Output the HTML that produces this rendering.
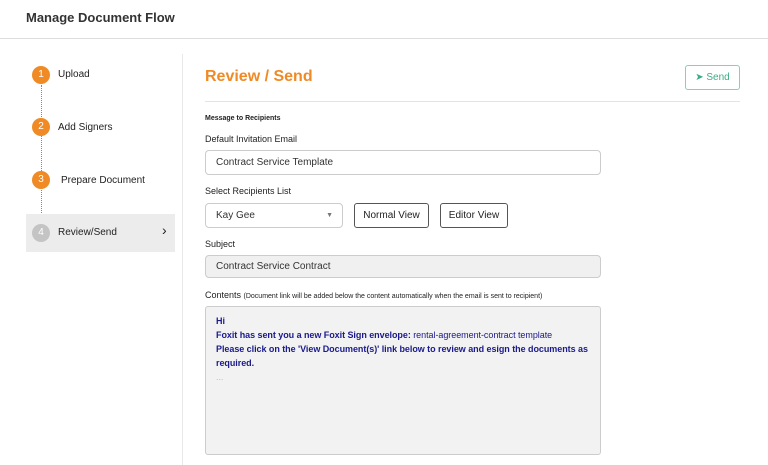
<!DOCTYPE html>
<html><head><style>
*{box-sizing:border-box;margin:0;padding:0}
body{width:768px;height:465px;background:#fff;font-family:"Liberation Sans",sans-serif;color:#222;position:relative;overflow:hidden}
.a{position:absolute}
.t{font-size:12px;white-space:nowrap}
.c{width:18px;height:18px;border-radius:50%;background:#f08a24;color:#fff;font-size:10px;text-align:center;line-height:18px}
.inp{border:1px solid #ccc;border-radius:4px;font-size:10px;padding-left:10px;color:#333}
.btn{border:1px solid #555;border-radius:3px;font-size:10px;text-align:center;background:#fff}
</style></head><body>
<div class="a" style="left:26px;top:10px;font-size:13px;font-weight:bold;color:#333">Manage Document Flow</div>
<div class="a" style="left:0;top:38px;width:768px;height:1px;background:#ddd"></div>
<div class="a" style="left:182px;top:54px;width:1px;height:411px;background:#e8e8e8"></div>
<div class="a" style="left:41px;top:85px;height:130px;border-left:1px dotted #888"></div>
<div class="a" style="left:26px;top:214px;width:149px;height:38px;background:#ececec"></div>
<div class="a c" style="left:32px;top:66px">1</div><div class="a t" style="left:58px;top:69px;font-size:10px">Upload</div>
<div class="a c" style="left:32px;top:118px">2</div><div class="a t" style="left:58px;top:122px;font-size:10px">Add Signers</div>
<div class="a c" style="left:32px;top:171px">3</div><div class="a t" style="left:61px;top:175px;font-size:10px">Prepare Document</div>
<div class="a c" style="left:32px;top:224px;background:#c4c4c4">4</div><div class="a t" style="left:58px;top:227px;font-size:10px">Review/Send</div>
<div class="a" style="left:162px;top:222px;font-size:14px">›</div>
<div class="a" style="left:205px;top:68px;font-size:16px;font-weight:bold;color:#f08a24">Review / Send</div>
<div class="a" style="left:685px;top:65px;width:55px;height:25px;border:1px solid #7fd4b5;border-radius:3px;color:#3aad84;font-size:10px;text-align:center;line-height:23px">➤ Send</div>
<div class="a" style="left:205px;top:101px;width:535px;height:1px;background:#e4e4e4"></div>
<div class="a t" style="left:205px;top:115px;font-size:7px;font-weight:bold">Message to Recipients</div>
<div class="a t" style="left:205px;top:134px;font-size:9px">Default Invitation Email</div>
<div class="a inp" style="left:205px;top:150px;width:396px;height:25px;line-height:23px">Contract Service Template</div>
<div class="a t" style="left:205px;top:186px;font-size:9px">Select Recipients List</div>
<div class="a inp" style="left:205px;top:203px;width:138px;height:25px;line-height:23px">Kay Gee<span style="position:absolute;right:9px;font-size:7px;color:#777">▼</span></div>
<div class="a btn" style="left:354px;top:203px;width:75px;height:25px;line-height:23px">Normal View</div>
<div class="a btn" style="left:440px;top:203px;width:68px;height:25px;line-height:23px">Editor View</div>
<div class="a t" style="left:205px;top:239px;font-size:9px">Subject</div>
<div class="a inp" style="left:205px;top:255px;width:396px;height:23px;line-height:21px;background:#f0f0f0">Contract Service Contract</div>
<div class="a t" style="left:205px;top:290px;font-size:9px">Contents <span style="font-size:7px">(Document link will be added below the content automatically when the email is sent to recipient)</span></div>
<div class="a" style="left:205px;top:306px;width:396px;height:149px;border:1px solid #ccc;border-radius:3px;background:#f2f2f2;padding:7px 4px 6px 10px;color:#1a1a8c;font-size:9px;line-height:14px;font-weight:bold;letter-spacing:-0.05px">Hi<br>Foxit has sent you a new Foxit Sign envelope: <span style="font-weight:normal">rental-agreement-contract template</span><br>Please click on the 'View Document(s)' link below to review and esign the documents as required.<br><span style="color:#bbb;font-weight:normal">...</span></div>
</body></html>
